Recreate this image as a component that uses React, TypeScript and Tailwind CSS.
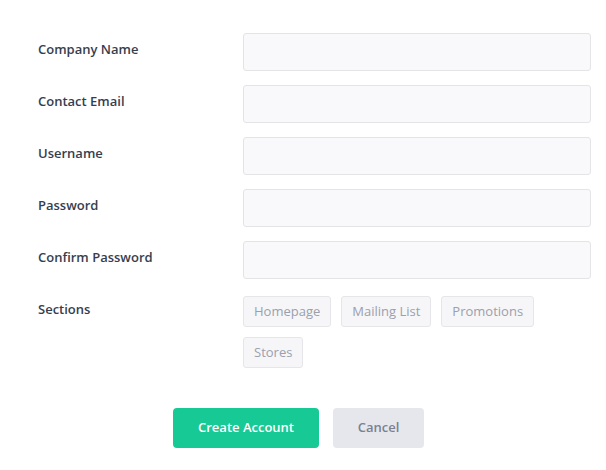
import React from "react";

const fields = ["Company Name", "Contact Email", "Username", "Password", "Confirm Password"];
const tags = ["Homepage", "Mailing List", "Promotions", "Stores"];

export default function App() {
  return (
    <div className="w-[606px] h-[470px] bg-white pl-[38px] pr-[15px] pt-[33px]" style={{ fontFamily: '"Open Sans", sans-serif' }}>
      <div className="flex flex-col gap-[14px]">
        {fields.map((f) => (
          <div key={f} className="flex">
            <label className="w-[205px] pt-[7px] text-[13px] leading-[18px] font-semibold text-[#363e4e]">{f}</label>
            <div className="w-[348px] h-[38px] rounded-[3px] border border-[#e4e4e7] bg-[#f9f9fb]" />
          </div>
        ))}
        <div className="flex mt-[3px]">
          <label className="w-[205px] pt-[4px] text-[13px] leading-[18px] font-semibold text-[#363e4e]">Sections</label>
          <div className="w-[348px] flex flex-wrap gap-x-[10px] gap-y-[10px] content-start">
            {tags.map((t) => (
              <span key={t} className="h-[31px] px-[10px] flex items-center rounded-[3px] border border-[#e6e6ea] bg-[#f6f6f8] text-[13px] text-[#9aa0ad]">
                {t}
              </span>
            ))}
          </div>
        </div>
      </div>
      <div className="flex gap-[14px] ml-[135px] mt-[40px]">
        <button className="w-[146px] h-[40px] rounded-[4px] bg-[#17c994] text-white text-[13px] font-semibold">Create Account</button>
        <button className="w-[91px] h-[40px] rounded-[4px] bg-[#e6e7ec] text-[#7a8192] text-[13px] font-semibold">Cancel</button>
      </div>
    </div>
  );
}
